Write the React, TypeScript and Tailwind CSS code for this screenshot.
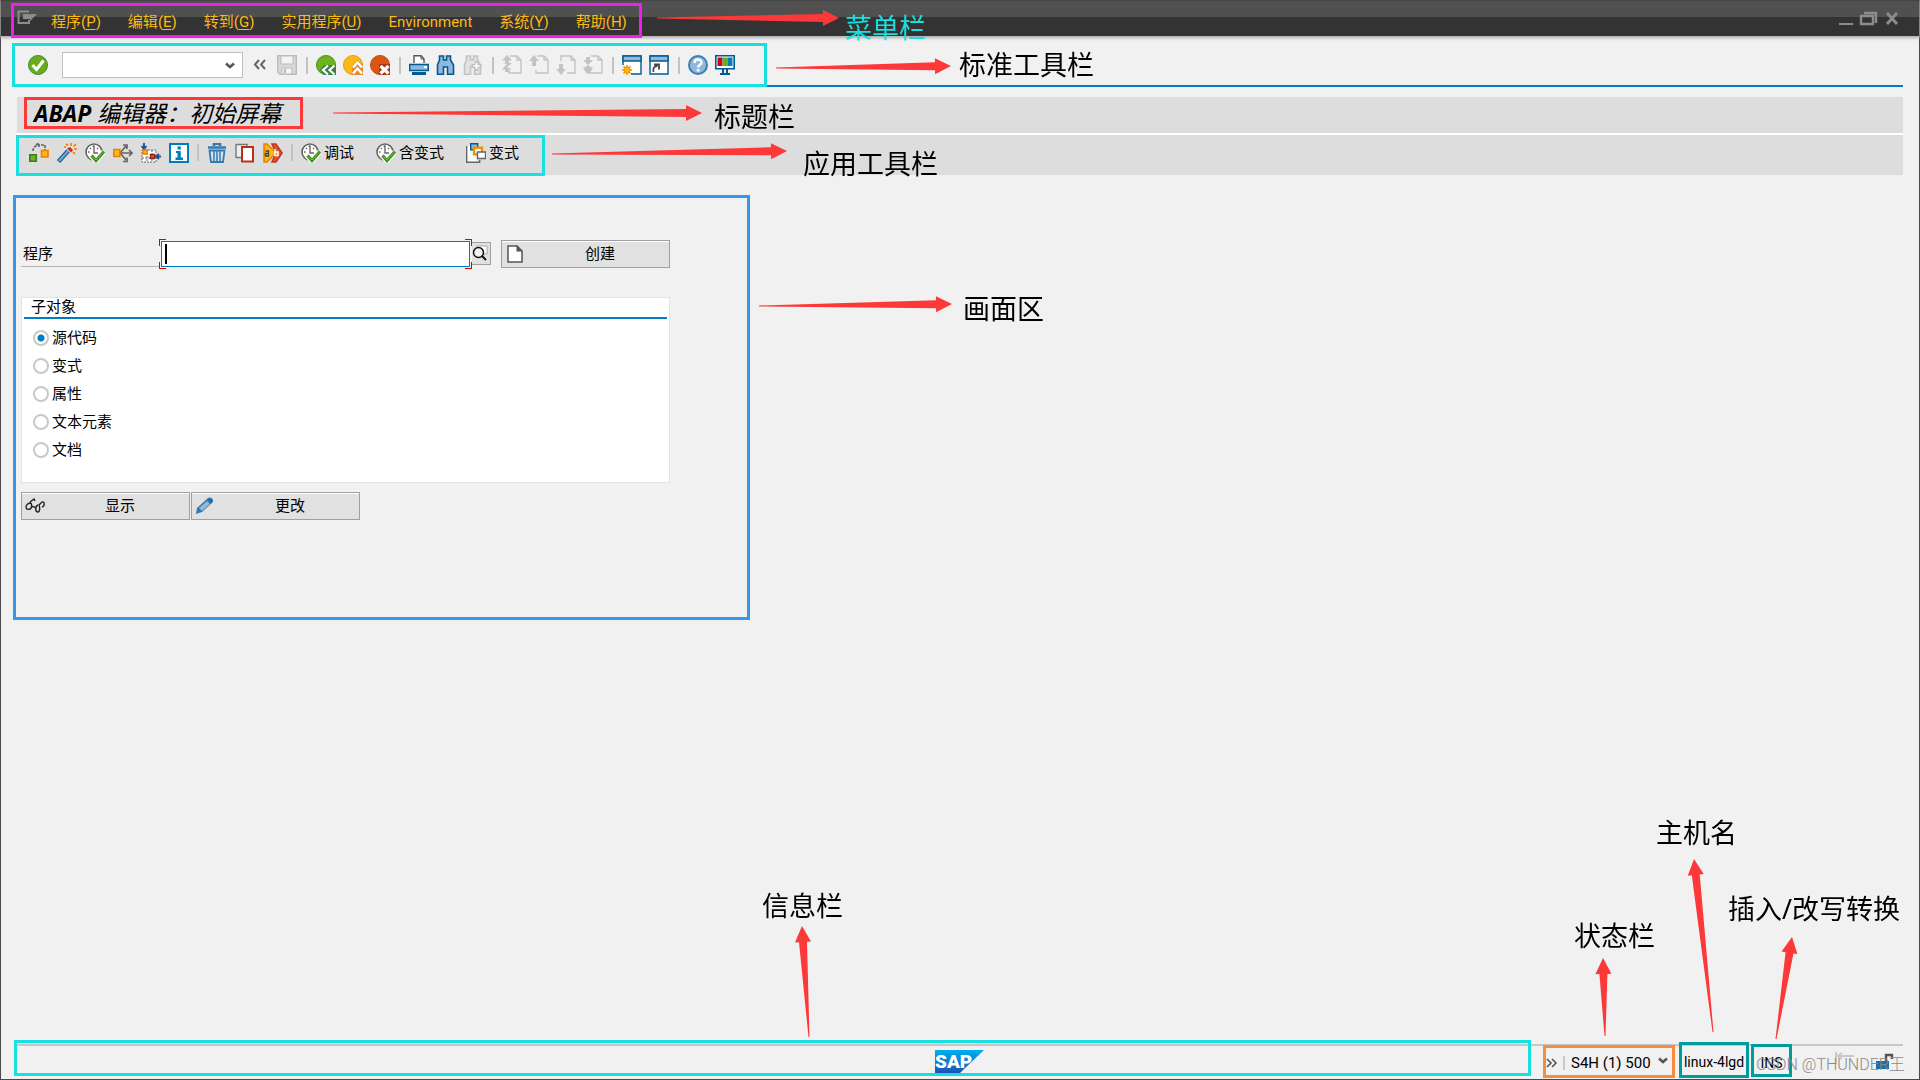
import { FunctionComponent, ReactNode, useState } from "react";

interface IconButtonProps {
  label: string;
  disabled?: boolean;
  className?: string;
  children: ReactNode;
}

interface ArrowProps {
  from: [number, number];
  to: [number, number];
}

interface NoteProps {
  text: string;
  place: string;
}

const Icon: FunctionComponent<{ children: ReactNode }> = ({ children }) => (
  <svg viewBox="0 0 20 20" className="block h-5 w-5 shrink-0" fill="none" aria-hidden="true">
    {children}
  </svg>
);

const IconButton: FunctionComponent<IconButtonProps> = ({
  label,
  disabled,
  className,
  children,
}) => (
  <button
    type="button"
    aria-label={label}
    title={label}
    disabled={disabled}
    className={`shrink-0 ${className || ""}`}
  >
    <Icon>{children}</Icon>
  </button>
);

const Separator: FunctionComponent<{ className?: string }> = ({ className }) => (
  <span className={`h-[17px] w-0.5 shrink-0 bg-[#c3c3c3] ${className || ""}`} />
);

const ClockCheck = () => (
  <>
    <circle cx="9" cy="9" r="8" fill="#fff" stroke="#666" strokeWidth="1.6" />
    <path d="M9 2.5v7.5h4M9 2.5l-1.5 1M3 9h1.5M5 5l1 1M13 5l-1 1" stroke="#666" strokeWidth="1.4" />
    <path d="M6 12.5l5 5.5 8-9.5" stroke="#fff" strokeWidth="5" />
    <path d="M6.5 12.5l4.5 5 8-9" stroke="#3f8f1f" strokeWidth="3.2" />
    <path d="M7.5 13.5l3.5 3.5 7-7.6" stroke="#7ac143" strokeWidth="1" />
  </>
);

const PageOutline = () => (
  <path d="M8 1h7l4 4v13H7v-3M15 1v4h4" stroke="#c3c3c3" strokeWidth="1.4" />
);

const BinocularsShape = ({ fill, stroke }: { fill: string; stroke: string }) => (
  <path
    d="M3.500 1h4v4h3V1h4v4l3 5v9.300h-6V12h-4v7.300h-6V10l2-5z"
    fill={fill}
    stroke={stroke}
    strokeWidth="1.600"
  />
);

const WindowShape = () => (
  <>
    <path d="M1 1h18v18H1z" fill="#fff" stroke="#005b8f" strokeWidth="1.4" />
    <path d="M1 1h18v5H1z" fill="#91b7dc" stroke="#005b8f" strokeWidth="1.4" />
  </>
);

const menus = [
  { name: "程序", hotkey: "P" },
  { name: "编辑", hotkey: "E" },
  { name: "转到", hotkey: "G" },
  { name: "实用程序", hotkey: "U" },
  { name: "", hotkey: "" },
  { name: "系统", hotkey: "Y" },
  { name: "帮助", hotkey: "H" },
];

const TitleBar = () => (
  <header className="flex h-9 items-start justify-between border-t border-[#444] bg-[linear-gradient(#505050_16px,#333_16px)] shadow-[0_1px_3px_1px_#aaa]">
    <nav className="ml-2.5 mt-0.5 flex h-[35px] w-[631px] items-center border-[3px] border-[#f31cf0] text-[15px] leading-5 text-[#fdb913]">
      <button type="button" aria-label="窗口菜单" className="ml-[3px] mr-3.5 self-start">
        <Icon>
          <path d="M12 5.500H1.500v11.500H12V14" stroke="#8c8c8c" strokeWidth="2" />
          <path d="M6 8h14l-7 7v-2H6z" fill="#8c8c8c" />
        </Icon>
      </button>
      <ul className="flex gap-[27px] whitespace-nowrap pt-0.5">
        {menus.map(({ name, hotkey }) => (
          <li key={hotkey}>
            <button type="button">
              {name ? (
                <>
                  {name}(<u className="underline-offset-2">{hotkey}</u>)
                </>
              ) : (
                <>
                  En<u className="underline-offset-2">v</u>ironment
                </>
              )}
            </button>
          </li>
        ))}
      </ul>
    </nav>
    <div className="mr-4 mt-2 flex gap-1 text-[#8c8c8c]">
      <button type="button" aria-label="最小化">
        <Icon>
          <path d="M4 15h14" stroke="currentColor" strokeWidth="2" />
        </Icon>
      </button>
      <button type="button" aria-label="还原">
        <Icon>
          <path d="M2 7h12v8H2zM5 4h12v10" stroke="currentColor" strokeWidth="2.4" />
        </Icon>
      </button>
      <button type="button" aria-label="关闭">
        <Icon>
          <path d="M4 4l10 11M14 4L4 15" stroke="currentColor" strokeWidth="3" />
        </Icon>
      </button>
    </div>
  </header>
);

const StandardToolbar = () => (
  <div className="ml-3 mr-4 mt-[7px] h-11 border-b-2 border-[#007cc0]">
    <div
      role="toolbar"
      aria-label="标准工具栏"
      className="relative -ml-px flex h-11 w-[755px] items-center gap-[7px] border-[3px] border-[#16e0e0] pl-[13px]"
    >
      <IconButton label="回车" className="mr-[7px]">
        <circle cx="10" cy="10" r="9.500" fill="#69ad1e" stroke="#3e8a3e" />
        <path d="M4.500 10l4 4.500 7-9" stroke="#fff" strokeWidth="3" />
      </IconButton>
      <div className="relative">
        <input
          aria-label="命令"
          className="block h-[26px] w-[181px] border border-[#bfbfbf] bg-white pl-1 pr-6 text-[15px] outline-none"
        />
        <svg viewBox="0 0 10 7" className="absolute right-2 top-2.5 h-[7px] w-2.5" fill="none">
          <path d="M1 1.500l4 3.500 4-3.500" stroke="#555" strokeWidth="2.500" />
        </svg>
      </div>
      <IconButton label="收起">
        <path d="M9 5L5 9.500 9 14M15 5l-4 4.500 4 4.500" stroke="#666" strokeWidth="2" />
      </IconButton>
      <IconButton label="保存" disabled>
        <path d="M.7.700h18.600v18.600H3L.7 17z" fill="#d8d8d8" stroke="#bbb" strokeWidth="1.4" />
        <path d="M4 1h12v8H4zM5 13h10v6H5z" fill="#f4f4f4" stroke="#bbb" />
        <path d="M7 14h2v4H7z" fill="#bbb" />
      </IconButton>
      <Separator className="ml-0.5 mr-px" />
      <IconButton label="返回">
        <circle cx="10" cy="10" r="9.500" fill="#6cb31e" stroke="#4c8b22" />
        <path d="M8 10h12v10H8l-4-5z" fill="#3b7d48" />
        <path d="M12 10.500L7 15l5 4.500M18.500 10.500l-5 4.500 5 4.500" stroke="#fff" strokeWidth="2.200" />
      </IconButton>
      <IconButton label="退出">
        <circle cx="10" cy="10" r="9.500" fill="#fcb813" stroke="#e8921e" />
        <path d="M9 20v-9l5.500-6L20 11v9z" fill="#e8892b" />
        <path d="M10 12.500l4.500-5 4.500 5M10 18.500l4.500-5 4.500 5" stroke="#fff" strokeWidth="2.400" />
      </IconButton>
      <IconButton label="取消">
        <circle cx="10" cy="10" r="9.500" fill="#dc5512" stroke="#b8491c" />
        <path d="M9 9h11v11H9z" fill="#a5371d" />
        <path d="M10.500 11l8 7.500M18.500 11l-8 7.500" stroke="#fff" strokeWidth="3.200" />
      </IconButton>
      <Separator className="ml-0.5 mr-px" />
      <IconButton label="打印">
        <path d="M5 8V.700h7L15 4v4" fill="#fff" stroke="#555" strokeWidth="1.4" />
        <path d="M12 .700V4h3" stroke="#555" />
        <path d="M.7 9.500h18.600v6H.7z" fill="#91b7dc" stroke="#005b8f" strokeWidth="1.4" />
        <path d="M15 11h3v2h-3z" fill="#fff" />
        <path d="M3 17h14v3H3z" fill="#005b8f" />
      </IconButton>
      <IconButton label="查找">
        <BinocularsShape fill="#91b7dc" stroke="#005b8f" />
      </IconButton>
      <IconButton label="查找下一个" disabled>
        <BinocularsShape fill="#e3e3e3" stroke="#c3c3c3" />
        <path d="M13.500 6v10M8.500 11h10" stroke="#c3c3c3" strokeWidth="4" />
        <path d="M13.500 8v6M10.500 11h6" stroke="#fff" strokeWidth="1.500" />
      </IconButton>
      <Separator className="ml-0.5 mr-px" />
      <IconButton label="第一页" disabled>
        <PageOutline />
        <path d="M0 5.500L5 0l5 5.500H7V8h3l-5 4 5 2.500H7V17H3v-2.500H0L5 9 0 8h3V5.500z" fill="#c3c3c3" />
      </IconButton>
      <IconButton label="上一页" disabled>
        <PageOutline />
        <path d="M0 6l5-6 5 6H7v5H3V6z" fill="#c3c3c3" />
      </IconButton>
      <IconButton label="下一页" disabled>
        <path d="M5 6V1h10l4 4v13h-8M15 1v4h4" stroke="#c3c3c3" strokeWidth="1.4" />
        <path d="M0 14l5 6 5-6H7V9H3v5z" fill="#c3c3c3" />
      </IconButton>
      <IconButton label="最后一页" disabled>
        <PageOutline />
        <path d="M0 5h3V2h4v3h3l-5 5 5 3.500-5 6-5-6 5-3.500z" fill="#c3c3c3" />
      </IconButton>
      <Separator className="ml-0.5 mr-px" />
      <IconButton label="新建会话">
        <WindowShape />
        <path d="M0 10h9v10H0z" fill="#f1f1f1" />
        <path d="M5 10v10M0 15h10M1.500 11.500l7 7M8.500 11.500l-7 7" stroke="#f39200" strokeWidth="1.600" />
        <circle cx="5" cy="15" r="3" fill="#fdb913" stroke="#f39200" />
      </IconButton>
      <IconButton label="创建快捷方式">
        <WindowShape />
        <path d="M4.500 17c-1-4 1-6 4-6M5 9.500h5v5" stroke="#444" strokeWidth="1.800" />
      </IconButton>
      <Separator className="ml-0.5 mr-px" />
      <IconButton label="帮助">
        <circle cx="10" cy="10" r="9" fill="#91b7dc" stroke="#3c7fb1" strokeWidth="2" />
        <path d="M6.500 8c0-4.500 7-4.500 7-.5 0 2.500-3.500 2.500-3.500 5" stroke="#fff" strokeWidth="2.400" />
        <path d="M8.800 14h2.600v2.500H8.800z" fill="#fff" />
      </IconButton>
      <IconButton label="自定义本地布局">
        <path d="M.8.800h18.400v12.900H.8z" fill="#fff" stroke="#005b8f" strokeWidth="1.600" />
        <path d="M2.500 2.500h5V11h-5z" fill="#d0021b" />
        <path d="M7.500 2.500h5V11h-5z" fill="#69ad1e" />
        <path d="M12.500 2.500h5V11h-5z" fill="#007cc0" />
        <path d="M7 14h2v4h2v-4h2v4h2v2H5v-2h2z" fill="#005b8f" />
      </IconButton>
    </div>
  </div>
);

const ApplicationToolbar = () => (
  <div
    role="toolbar"
    aria-label="应用工具栏"
    className="relative -ml-px flex h-[41px] w-[529px] items-center gap-2 border-[3px] border-[#16e0e0] pb-1.5 pl-2.5 text-[15px]"
  >
    <IconButton label="显示 <-> 更改">
      <path d="M4 8c0-4 3-6 6-6M12 2h4v6M7 1.500l3-1M10 1v3" stroke="#666" strokeWidth="1.600" strokeDasharray="3 1" />
      <path d="M.8 11.800h6.500v6.500H.8z" fill="#6cb31e" stroke="#3d7a2a" strokeWidth="1.600" />
      <path d="M12.500 7.500h6.500V14h-6.500z" fill="#fdb913" stroke="#ee7f00" strokeWidth="1.600" />
    </IconButton>
    <IconButton label="激活">
      <path d="M1.500 18.500L11 8" stroke="#005b8f" strokeWidth="4.400" />
      <path d="M2 18l9-10" stroke="#6fa5d0" strokeWidth="2.400" />
      <path d="M10 5.500l4 4 2-2.500-3-3z" fill="#e2231a" />
      <path d="M9 1l2 1.500M14 0v3M19 1l-2.500 2.500M17 6h3M16 9l2 2M7 4h2" stroke="#ee7f00" strokeWidth="1.600" />
    </IconButton>
    <IconButton label="执行">
      <ClockCheck />
    </IconButton>
    <IconButton label="使用处清单">
      <path d="M7 10l6-7M7 10h11M7 10l6 7M10 2h4v4M16 7l3 3-3 3M10 18.500h4v-4" stroke="#666" strokeWidth="1.700" />
      <path d="M.8 6.500h6v7h-6z" fill="#fdb913" stroke="#ee7f00" strokeWidth="1.600" />
    </IconButton>
    <IconButton label="重构">
      <path d="M1 7h14v12H1zM1 15h14M6 7v12M11 7v12" stroke="#666" fill="#fff" strokeDasharray="2 1" />
      <path d="M3 0v5M.5 3L3 6l2.500-3M20 13.500h-4M18 11l-3 2.500 3 2.500" stroke="#1d4f91" strokeWidth="1.800" />
      <path d="M2 7h4v4H2z" fill="#fdb913" stroke="#ee7f00" strokeWidth="1.400" />
      <path d="M9.500 11.500h4v4h-4z" fill="#e2543a" stroke="#8e2013" strokeWidth="1.400" />
    </IconButton>
    <IconButton label="信息">
      <path d="M1 1h18v18H1z" fill="#fff" stroke="#007cc0" strokeWidth="2" />
      <path d="M8.500 3.500h3.300v3H8.500zM7 8h4.800v6.500H14V17H6.500v-2.500h2V10H7z" fill="#007cc0" />
    </IconButton>
    <Separator />
    <IconButton label="删除">
      <path d="M7 3V.800h6V3M1 4.500h18" stroke="#3479ae" strokeWidth="2.600" />
      <path d="M2.500 7.500h15L16 19H4z" fill="#d5e6f3" stroke="#3479ae" strokeWidth="1.800" />
      <path d="M7 8v10M10 8v10M13 8v10" stroke="#3479ae" strokeWidth="1.500" />
    </IconButton>
    <IconButton label="复制">
      <path d="M1 1.500h11v13H1z" fill="#eee" stroke="#777" strokeWidth="1.400" />
      <path d="M7 4h11v14.500H7z" fill="#fff" stroke="#b8321a" strokeWidth="2" />
    </IconButton>
    <IconButton label="重命名">
      <path d="M9 1h4l6 9-6 9H9l4-9z" fill="#e2543a" stroke="#c0371d" strokeWidth="1.600" />
      <path d="M1 1h3l5 5 5 4-5 4-5 5H1z" fill="#fdb913" stroke="#ee7f00" strokeWidth="1.600" />
      <path d="M2.500 8h3v5h-3v-2.500h3" stroke="#444" strokeWidth="1.300" />
      <path d="M12 6v6.500h3V9h-3" stroke="#fff" strokeWidth="1.500" />
    </IconButton>
    <Separator />
    <button type="button" className="flex h-5 items-center gap-[3px] leading-5">
      <Icon>
        <ClockCheck />
      </Icon>
      调试
    </button>
    <button type="button" className="ml-[14px] flex h-5 items-center gap-[3px] leading-5">
      <Icon>
        <ClockCheck />
      </Icon>
      含变式
    </button>
    <button type="button" className="ml-[14px] flex h-5 items-center gap-[3px] leading-5">
      <Icon>
        <path d="M.7 3h10v16.300H.7z" fill="#fff" />
        <path d="M.7 3v16.300h13V17" stroke="#666" strokeWidth="1.400" />
        <path d="M4.700.700h7v6h-7z" fill="#91b7dc" stroke="#005b8f" strokeWidth="1.400" />
        <path d="M8 4.700h8v6.500H8z" fill="#fff" stroke="#f39200" strokeWidth="2.400" />
        <path d="M11.500 9h8v6.500h-8z" fill="#fff" stroke="#666" strokeWidth="1.400" />
      </Icon>
      变式
    </button>
  </div>
);

const pushButton =
  "flex h-7 w-[169px] items-center border border-[#a0a0a0] bg-[#e1e1e1] text-[15px] leading-5 shadow-[inset_0_1px_#fff]";

const subobjects = ["源代码", "变式", "属性", "文本元素", "文档"];

const ProgramForm = () => {
  const [program, setProgram] = useState<string>("");
  const [subobject, setSubobject] = useState<string>("源代码");

  return (
    <form
      onSubmit={(event) => event.preventDefault()}
      className="ml-3 mt-5 h-[425px] w-[737px] border-[3px] border-[#3996e8] px-[5px] pt-[41px] text-[15px] leading-5"
    >
      <div className="flex items-center">
        <label htmlFor="program" className="mb-0.5 h-7 w-[138px] border-b border-[#b5b5b5] pl-0.5 pt-[5px]">
          程序
        </label>
        <div className="relative h-[30px] w-[313px] p-0.5">
          <input
            id="program"
            autoFocus
            value={program}
            onChange={({ target }) => setProgram(target.value)}
            className="block h-[26px] w-full border border-[#007cc0] bg-white pl-[5px] caret-transparent outline-none"
          />
          <span className="absolute left-1.5 top-[5px] h-5 w-0.5 bg-black" />
          <span className="absolute left-0 top-0 h-[7px] w-[7px] border-l border-t border-[#e00000]" />
          <span className="absolute right-0 top-0 h-[7px] w-[7px] border-r border-t border-[#e00000]" />
          <span className="absolute bottom-0 left-0 h-[7px] w-[7px] border-b border-l border-[#e00000]" />
          <span className="absolute bottom-0 right-0 h-[7px] w-[7px] border-b border-r border-[#e00000]" />
        </div>
        <button
          type="button"
          aria-label="搜索帮助"
          className="mb-0.5 flex h-[23px] w-[19px] items-center border border-l-0 border-[#a0a0a0] bg-[#e1e1e1]"
        >
          <svg viewBox="0 0 16 16" className="h-4 w-4" fill="none">
            <path d="M5 1h10v8H5z" fill="#fff" stroke="#aaa" />
            <circle cx="6.500" cy="7.500" r="5" fill="#f1f1f1" stroke="#111" strokeWidth="1.500" />
            <path d="M10 11l4 4" stroke="#111" strokeWidth="2" />
          </svg>
        </button>
        <button type="submit" className={`ml-[10px] ${pushButton}`}>
          <svg viewBox="0 0 16 18" className="ml-[5px] h-[18px] w-4 shrink-0" fill="none">
            <path d="M1 1h9l5 5v11H1z" fill="#fff" stroke="#555" strokeWidth="1.500" />
            <path d="M9.500 0L16 6.500H9.500z" fill="#555" />
          </svg>
          <span className="ml-2 flex-1 text-center">创建</span>
        </button>
      </div>

      <div
        role="radiogroup"
        aria-labelledby="subobjects"
        className="mt-7 w-[649px] border border-[#e3e3e3] bg-white px-0.5 pb-[18px]"
      >
        <p id="subobjects" className="mb-[5px] h-[21px] border-b-2 border-[#007cc0] pl-[7px] leading-[18px]">
          子对象
        </p>
        {subobjects.map((name) => (
          <label key={name} className="flex h-7 items-center gap-[3px] pl-[9px]">
            <input
              type="radio"
              name="subobject"
              checked={subobject === name}
              onChange={() => setSubobject(name)}
              className="h-4 w-4 appearance-none rounded-full border-2 border-[#c8c8c8] bg-white checked:bg-[radial-gradient(#007cc0_3px,transparent_4px)]"
            />
            {name}
          </label>
        ))}
      </div>

      <div className="mt-[9px] flex gap-px">
        <button type="button" className={pushButton}>
          <svg viewBox="0 0 20 16" className="ml-[3px] h-4 w-5 shrink-0" fill="none">
            <path
              d="M6 5c-3 0-5 2-5 4s2 3 4 2 2-4 1-6M5 4l4-3 1 2M6 10c1-2 3-2 4 0M13 7c-3 1-3 7 0 7 2 0 2-5 1-7l3-3c3-1 3 4 0 5"
              stroke="#222"
              strokeWidth="1.400"
            />
          </svg>
          <span className="ml-1.5 flex-1 text-center">显示</span>
        </button>
        <button type="button" className={pushButton}>
          <svg viewBox="0 0 20 20" className="ml-[3px] h-5 w-5 shrink-0" fill="none">
            <path d="M1 18l1-6L13 2c3-2 7 2 4 5L7 16z" fill="#3479ae" />
            <path d="M4 12l8-7 3 3-8 7z" fill="#91b7dc" />
            <path d="M14 3l3 3" stroke="#1f5f90" strokeWidth="1.500" />
          </svg>
          <span className="ml-1.5 flex-1 text-center">更改</span>
        </button>
      </div>
    </form>
  );
};

const StatusBar = () => (
  <footer className="relative flex h-[39px] items-start pl-[13px] pr-4 text-base leading-5 whitespace-nowrap">
    <div className="absolute left-4 right-4 top-1 h-0.5 bg-[#c8c8c8]" />
    <div className="relative h-9 flex-1 border-[3px] border-[#16e0e0]" />
    <svg viewBox="0 0 49 23" className="absolute left-1/2 top-2.5 -ml-[25px] h-[23px] w-[49px]" role="img" aria-label="SAP">
      <defs>
        <linearGradient id="sap" x1="0" y1="0" x2="0" y2="1">
          <stop offset="0" stopColor="#00aeef" />
          <stop offset="1" stopColor="#1d52b5" />
        </linearGradient>
      </defs>
      <path d="M0 0h49L25 23H0z" fill="url(#sap)" />
      <text x="0" y="18" fontSize="19" fontWeight="900" fill="#fff" fontFamily="Roboto">
        SAP
      </text>
    </svg>
    <div className="relative ml-3 mt-[5px] flex h-[33px] w-[132px] items-center border-[3px] border-[#f98b3c] pt-0.5">
      <button type="button" aria-label="展开">
        <svg viewBox="0 0 12 12" className="h-3 w-3" fill="none">
          <path d="M1 2l4 4-4 4M6 2l4 4-4 4" stroke="#555" strokeWidth="1.600" />
        </svg>
      </button>
      <span className="ml-[5px] h-3.5 w-0.5 bg-[#c8c8c8]" />
      <button type="button" className="ml-[6px] flex items-center gap-[7px] text-[15px]">
        S4H (1) 500
        <svg viewBox="0 0 10 7" className="mb-1 h-[7px] w-2.5" fill="none">
          <path d="M1 1.500l4 3.500 4-3.500" stroke="#555" strokeWidth="2.500" />
        </svg>
      </button>
    </div>
    <div className="relative ml-1 mt-0.5 flex h-9 w-[70px] items-center justify-center border-[3px] border-[#009c9c] pt-1 text-sm">
      linux-4lgd
    </div>
    <div className="relative ml-0.5 mt-1 flex h-[33px] w-[41px] items-center justify-center border-[3px] border-[#009c9c] pt-1 text-sm">
      INS
    </div>
    <svg viewBox="0 0 20 20" className="ml-[83px] mr-2 mt-3 h-5 w-5" fill="none">
      <path d="M11 9V3h6v4" stroke="#555" strokeWidth="2.400" />
      <path d="M1 9h13v8H1z" fill="#1f6ea8" />
    </svg>
    <svg viewBox="0 0 24 12" className="absolute right-[62px] top-3 h-3 w-6" fill="none">
      <path d="M3 0v12M5 4h16M9 1L5 4l4 3" stroke="#c8c8c8" strokeWidth="2" />
    </svg>
    <span className="absolute right-3.5 top-[13px] text-base font-light text-[#8a8a8a]">CSDN @THUNDER王</span>
  </footer>
);

// tapered arrow: thin at the tail, 8px wide where it meets the head
const Arrow: FunctionComponent<ArrowProps> = ({ from, to }) => {
  const [x1, y1] = from;
  const [x2, y2] = to;
  const length = Math.hypot(x2 - x1, y2 - y1);
  const angle = (Math.atan2(y2 - y1, x2 - x1) * 180) / Math.PI;
  const neck = length - 16;

  return (
    <path
      transform={`translate(${x1} ${y1}) rotate(${angle})`}
      d={`M0 -0.5L${neck} -4V-8L${length} 0L${neck} 8V4L0 0.5Z`}
      fill="#fd3838"
    />
  );
};

const arrows: ArrowProps[] = [
  { from: [657, 18], to: [839, 18] },
  { from: [776, 68], to: [951, 66] },
  { from: [333, 113], to: [702, 113] },
  { from: [552, 154], to: [787, 151] },
  { from: [759, 306], to: [952, 304] },
  { from: [809, 1037], to: [802, 926] },
  { from: [1605, 1036], to: [1603, 958] },
  { from: [1713, 1032], to: [1694, 859] },
  { from: [1776, 1039], to: [1792, 937] },
];

const notes: NoteProps[] = [
  { text: "菜单栏", place: "left-[845px] top-[8px] text-[#16e0e0]" },
  { text: "标准工具栏", place: "left-[959px] top-[45px]" },
  { text: "标题栏", place: "left-[714px] top-[97px]" },
  { text: "应用工具栏", place: "left-[803px] top-[144px]" },
  { text: "画面区", place: "left-[963px] top-[289px]" },
  { text: "信息栏", place: "left-[762px] top-[886px]" },
  { text: "状态栏", place: "left-[1574px] top-[916px]" },
  { text: "主机名", place: "left-[1656px] top-[813px]" },
  { text: "插入/改写转换", place: "left-[1728px] top-[889px]" },
];

const Annotations = () => (
  <div className="pointer-events-none absolute inset-0 overflow-hidden">
    <svg className="absolute left-0 top-0 h-full w-full" aria-hidden="true">
      {arrows.map((arrow, arrowIdx) => (
        <Arrow key={arrowIdx} {...arrow} />
      ))}
    </svg>
    {notes.map(({ text, place }) => (
      <p
        key={text}
        className={`absolute whitespace-nowrap font-['Noto_Sans','Noto_Sans_CJK_SC',sans-serif] text-[27px] leading-10 ${place}`}
      >
        {text}
      </p>
    ))}
  </div>
);

const App: FunctionComponent = () => (
  <div className="relative flex min-h-screen flex-col bg-[#f1f1f1] font-['Roboto','Noto_Sans_CJK_SC',sans-serif] text-black">
    <div className="flex flex-1 flex-col border-x border-b border-[#4a4a4a]">
      <TitleBar />
      <StandardToolbar />
      <div className="ml-4 mr-4 mt-2.5 h-9 bg-[#ddd]">
        <h1 className="ml-[7px] flex h-8 w-[279px] items-center border-[3px] border-[#fd3838] pl-[7px] font-['Noto_Sans','Noto_Sans_CJK_SC',sans-serif] text-[23px] leading-6 italic whitespace-nowrap">
          <b>ABAP</b>&nbsp;编辑器：初始屏幕
        </h1>
      </div>
      <div className="ml-4 mr-4 h-[42px] border-t-2 border-white bg-[#ddd]">
        <ApplicationToolbar />
      </div>
      <main className="flex-1">
        <ProgramForm />
      </main>
      <StatusBar />
    </div>
    <Annotations />
  </div>
);

export default App;
